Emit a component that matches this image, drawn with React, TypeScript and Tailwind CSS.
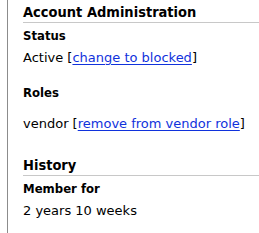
import React from "react";

const font = { fontFamily: '"DejaVu Sans", Verdana, sans-serif' };
const condensed = { fontFamily: '"DejaVu Sans Condensed", "DejaVu Sans", Verdana, sans-serif' };

const Heading: React.FC<{ children: React.ReactNode; className?: string }> = ({ children, className }) => (
  <h3
    className={"border-b border-[#c8c8c8] text-[14.5px] font-bold leading-[20px] text-black " + (className ?? "")}
    style={condensed}
  >
    {children}
  </h3>
);

const Label: React.FC<{ children: React.ReactNode; className?: string }> = ({ children, className }) => (
  <div className={"text-[13px] font-bold leading-[22px] text-black " + (className ?? "")} style={condensed}>
    {children}
  </div>
);

const Bracketed: React.FC<{ label: string; link: string }> = ({ label, link }) => (
  <div className="text-[13px] leading-[22px] text-black">
    {label} [
    <a href="#" className="text-[#1032dc] underline underline-offset-2">
      {link}
    </a>
    ]
  </div>
);

export default function App() {
  return (
    <div className="min-h-screen bg-white pl-[7px]" style={font}>
      <div className="min-h-[233px] border-l border-[#8c8c8c] pl-[15px] pt-[2px]">
        <Heading>Account Administration</Heading>
        <Label className="mt-[2px]">Status</Label>
        <Bracketed label="Active" link="change to blocked" />
        <Label className="mt-[13px]">Roles</Label>
        <div className="mt-[9px]">
          <Bracketed label="vendor" link="remove from vendor role" />
        </div>
        <Heading className="mt-[20px]">History</Heading>
        <Label className="mt-[2px]">Member for</Label>
        <div className="text-[13px] leading-[22px]">2 years 10 weeks</div>
      </div>
    </div>
  );
}
